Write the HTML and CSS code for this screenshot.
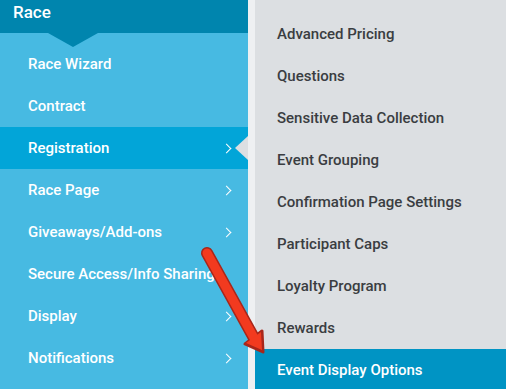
FILE: index.html
```html
<!DOCTYPE html>
<html lang="en">
  <head>
    <meta charset="UTF-8" />
    <meta name="viewport" content="width=device-width, initial-scale=1.0" />
    <title>Race</title>
    <link rel="stylesheet" href="styles.css">
  </head>
  <body>
    <div class="wrap">
      <div class="sidebar">
        <div class="side-head">Race</div>
        <ul class="side-menu">
          <li class="side-item">Race Wizard</li>
          <li class="side-item">Contract</li>
          <li class="side-item active">Registration <span class="chev"></span></li>
          <li class="side-item">Race Page <span class="chev"></span></li>
          <li class="side-item">Giveaways/Add-ons <span class="chev"></span></li>
          <li class="side-item">Secure Access/Info Sharing</li>
          <li class="side-item">Display <span class="chev"></span></li>
          <li class="side-item">Notifications <span class="chev"></span></li>
        </ul>
      </div>
      <div class="strip"></div>
      <div class="sub">
        <ul class="sub-menu">
          <li class="sub-item">Advanced Pricing</li>
          <li class="sub-item">Questions</li>
          <li class="sub-item">Sensitive Data Collection</li>
          <li class="sub-item">Event Grouping</li>
          <li class="sub-item">Confirmation Page Settings</li>
          <li class="sub-item">Participant Caps</li>
          <li class="sub-item">Loyalty Program</li>
          <li class="sub-item">Rewards</li>
          <li class="sub-item active">Event Display Options</li>
        </ul>
      </div>
      <svg class="arrow" width="506" height="389" viewBox="0 0 506 389">
        <line x1="207" y1="253" x2="254" y2="338" stroke="#a8261a" stroke-width="12" stroke-linecap="round" />
        <polygon points="263,352 245,344 262,331" fill="#a8261a" stroke="#a8261a" stroke-width="3" stroke-linejoin="round" />
        <line x1="207" y1="253" x2="254" y2="338" stroke="#f23a1f" stroke-width="9" stroke-linecap="round" />
        <polygon points="262,350 246,343 261,332" fill="#f23a1f" />
      </svg>
    </div>
  </body>
</html>
```

FILE: styles.css
```css
body {
  margin: 0;
  font-family: Roboto, "Liberation Sans", sans-serif;
}
ul {
  list-style: none;
  margin: 0;
  padding: 0;
}
.wrap {
  position: relative;
  display: flex;
  width: 506px;
  height: 389px;
  overflow: hidden;
}
.sidebar {
  width: 248px;
  background-color: #47bae2;
  color: white;
}
.side-head {
  position: relative;
  height: 33px;
  padding-left: 13px;
  font-size: 17px;
  font-weight: 500;
  line-height: 24px;
  background-color: #0085ae;
}
.side-head::after {
  content: '';
  position: absolute;
  left: 48px;
  top: 33px;
  border-left: 25px solid transparent;
  border-right: 25px solid transparent;
  border-top: 14px solid #0085ae;
}
.side-menu {
  margin-top: 10px;
}
.side-item {
  position: relative;
  display: flex;
  justify-content: space-between;
  align-items: center;
  height: 42px;
  padding: 0 16px 0 28px;
  font-size: 15px;
  font-weight: 500;
  white-space: nowrap;
}
.side-item.active {
  background-color: #02a5d8;
}
.side-item.active::after {
  content: '';
  position: absolute;
  right: 0;
  top: 9px;
  border-top: 12px solid transparent;
  border-bottom: 12px solid transparent;
  border-right: 13px solid #dcdfe2;
}
.chev {
  width: 6px;
  height: 6px;
  border-top: 1.6px solid white;
  border-right: 1.6px solid white;
  transform: rotate(45deg);
  margin-right: 2px;
}
.strip {
  width: 7px;
  background-color: #eef0f2;
}
.sub {
  flex: 1;
  padding-top: 13px;
  background-color: #dcdfe2;
}
.sub-item {
  display: flex;
  align-items: center;
  height: 42px;
  padding-left: 22px;
  font-size: 15px;
  font-weight: 500;
  color: #3a3d41;
}
.sub-item.active {
  color: white;
  background-color: #0094c4;
}
.arrow {
  position: absolute;
  left: 0;
  top: 0;
}
```
